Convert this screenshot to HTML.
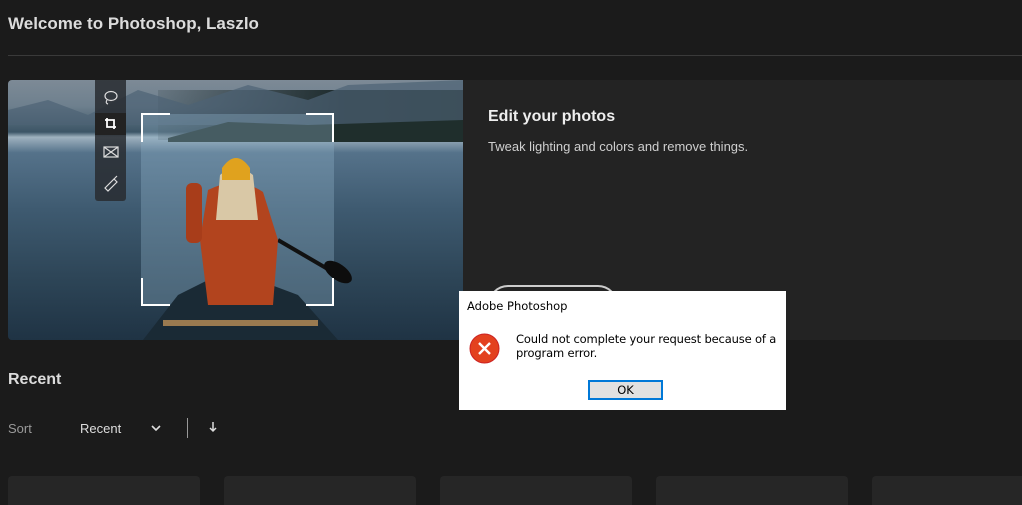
<!DOCTYPE html>
<html><head><style>
html,body{margin:0;height:505px}
body{width:1022px;background:#1b1b1b;font-family:"Liberation Sans",sans-serif;overflow:hidden;position:relative;color:#e6e6e6}
.a{position:absolute}
</style></head><body>
<div class="a" style="left:8px;top:14px;font-size:17px;font-weight:bold;color:#dcdcdc">Welcome to Photoshop, Laszlo</div>
<div class="a" style="left:8px;top:55px;width:1014px;height:1px;background:#3a3a3a"></div>
<div class="a" style="left:8px;top:80px;width:1014px;height:260px;background:#232323;border-radius:4px 0 0 4px;overflow:hidden">
 <div class="a" style="left:0;top:0;width:455px;height:260px;background:linear-gradient(180deg,#7d8a96 0%,#6e808e 10%,#3c5566 20%,#9fb2bf 22%,#55728a 28%,#3e5a70 50%,#2e4658 75%,#1f3344 100%)"></div>
 <div class="a" style="left:150px;top:10px;width:305px;height:50px;background:linear-gradient(90deg,rgba(40,55,60,.2),#1d2a2c 60%,#18241f)"></div>
 <svg class="a" style="left:0;top:0" width="455" height="260">
  <polygon points="0,30 40,20 80,35 130,10 180,25 240,5 300,20 340,5 455,0 455,45 0,45" fill="#4d6375" opacity=".7"/>
  <polygon points="160,58 220,42 300,45 455,40 455,62 160,62" fill="#1f2e2c"/>
  <rect x="133" y="34" width="193" height="192" fill="#8fb1c8" opacity=".35"/>
  <polygon points="135,260 170,215 200,200 250,200 290,215 330,260" fill="#1a2a35"/>
  <rect x="155" y="240" width="155" height="6" fill="#9a7a50"/>
  <line x1="270" y1="160" x2="330" y2="195" stroke="#111" stroke-width="4"/>
  <ellipse cx="330" cy="192" rx="16" ry="8" fill="#0d0d0d" transform="rotate(35 330 192)"/>
  <path d="M200 110 Q230 95 255 112 L270 160 L265 225 L200 225 L192 160 Z" fill="#b2441e"/>
  <rect x="178" y="103" width="16" height="60" rx="6" fill="#a83d1a"/>
  <path d="M212 95 Q228 80 245 95 L250 140 L208 140 Z" fill="#d9c8a6"/>
  <path d="M214 88 Q228 68 242 88 L242 100 L214 100 Z" fill="#e0a21e"/>
  <g stroke="#fff" stroke-width="2" fill="none">
   <path d="M134 62 V34 H162 M298 34 H325 V62 M134 198 V225 H162 M298 225 H325 V198"/>
  </g>
 </svg>
 <div class="a" style="left:87px;top:0;width:31px;height:121px;background:rgba(40,44,48,.85);border-radius:0 0 3px 3px"></div>
 <div class="a" style="left:87px;top:33px;width:31px;height:22px;background:#222"></div>
 <svg class="a" style="left:87px;top:0" width="31" height="121" fill="none" stroke="#ddd" stroke-width="1.2">
  <ellipse cx="16" cy="16" rx="6" ry="4.5"/><path d="M12 20 q-2 3 1 4"/>
  <path d="M12 38 v9 h9 M10 40 h9 v9" stroke="#fff" stroke-width="1.8"/>
  <rect x="9" y="67" width="14" height="10"/><path d="M9 67 l14 10 M23 67 l-14 10"/>
  <path d="M10 108 l9 -9 l3 3 l-9 9 z M19 99 l3 -3"/>
 </svg>
 <div class="a" style="left:480px;top:28px;font-size:16px;font-weight:bold;color:#eee">Edit your photos</div>
 <div class="a" style="left:480px;top:59px;font-size:13px;color:#cfcfcf">Tweak lighting and colors and remove things.</div>
 <div class="a" style="left:480px;top:205px;width:126px;height:40px;border:2px solid #ccc;border-radius:20px"></div>
</div>
<div class="a" style="left:8px;top:371px;font-size:16px;font-weight:bold;color:#dcdcdc">Recent</div>
<div class="a" style="left:8px;top:421px;font-size:13px;color:#9a9a9a">Sort</div>
<div class="a" style="left:80px;top:421px;font-size:13px;color:#ddd">Recent</div>
<svg class="a" style="left:150px;top:423px" width="12" height="10"><path d="M2 3 l4 4 l4 -4" stroke="#ddd" stroke-width="1.6" fill="none"/></svg>
<div class="a" style="left:187px;top:418px;width:1px;height:20px;background:#999"></div>
<svg class="a" style="left:207px;top:420px" width="12" height="14"><path d="M6 2 v9 M3 8 l3 3 l3 -3" stroke="#ddd" stroke-width="1.5" fill="none"/></svg>
<div class="a" style="left:8px;top:476px;width:192px;height:29px;background:#262626;border-radius:4px 4px 0 0"></div>
<div class="a" style="left:224px;top:476px;width:192px;height:29px;background:#262626;border-radius:4px 4px 0 0"></div>
<div class="a" style="left:440px;top:476px;width:192px;height:29px;background:#262626;border-radius:4px 4px 0 0"></div>
<div class="a" style="left:656px;top:476px;width:192px;height:29px;background:#262626;border-radius:4px 4px 0 0"></div>
<div class="a" style="left:872px;top:476px;width:150px;height:29px;background:#262626;border-radius:4px 0 0 0"></div>
<div class="a" style="left:459px;top:291px;width:327px;height:119px;background:#fff;color:#000;font-family:'DejaVu Sans','Liberation Sans',sans-serif">
 <div class="a" style="left:8px;top:8px;font-size:11.5px">Adobe Photoshop</div>
 <svg class="a" style="left:10px;top:42px" width="31" height="31"><circle cx="15.5" cy="15.5" r="14.5" fill="#e3411f" stroke="#c22" stroke-width="1"/><path d="M10 10 l11 11 M21 10 l-11 11" stroke="#fff" stroke-width="2.4"/></svg>
 <div class="a" style="left:57px;top:41px;font-size:11.5px;line-height:14px;width:270px;letter-spacing:-0.15px;white-space:nowrap">Could not complete your request because of a<br>program error.</div>
 <div class="a" style="left:129px;top:89px;width:75px;height:20px;border:2px solid #0078d7;background:#e1e1e1;box-sizing:border-box;font-size:11.5px;text-align:center;line-height:16px">OK</div>
</div>
</body></html>
